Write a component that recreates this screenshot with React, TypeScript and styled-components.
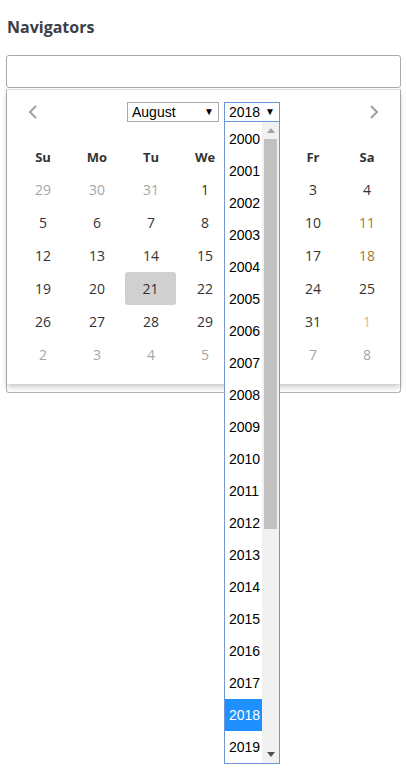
import React from 'react';
import styled, { createGlobalStyle } from 'styled-components';

const GlobalStyle = createGlobalStyle`
  html, body {
    margin: 0;
    padding: 0;
    background: #fff;
  }
  body {
    font-family: "Open Sans", "Liberation Sans", sans-serif;
  }
`;

const Page = styled.div`
  width: 407px;
  height: 773px;
  padding: 0 6px;
  box-sizing: border-box;
  overflow: hidden;
`;

const Title = styled.h3`
  margin: 16px 0 0 1px;
  height: 22px;
  line-height: 22px;
  font-size: 16px;
  font-weight: 700;
  color: #3b4046;
`;

const Input = styled.div`
  margin-top: 17px;
  height: 33px;
  border: 1px solid #aaa;
  border-radius: 3px;
  box-sizing: border-box;
`;

const PickerWrap = styled.div`
  margin-top: 1px;
  height: 304px;
  border: 1px solid #b4b4b4;
  border-top-color: #e2e2e2;
  border-radius: 0 0 3px 3px;
  box-sizing: border-box;
`;

const Calendar = styled.div`
  height: 294px;
  background: #fff;
  box-shadow: 0 3px 6px rgba(0, 0, 0, 0.22);
  padding: 0 7px 0 9px;
  box-sizing: border-box;
`;

const Header = styled.div`
  height: 50px;
  display: flex;
  align-items: flex-start;
  padding-top: 12px;
  box-sizing: border-box;
`;

const NavArrow = styled.div<{ $right?: boolean }>`
  width: 20px;
  height: 20px;
  display: flex;
  align-items: center;
  justify-content: center;
  margin: ${(p) => (p.$right ? '0 9px 0 0' : '0 0 0 7px')};
`;

const Selects = styled.div`
  flex: 1;
  display: flex;
  justify-content: center;
  gap: 5px;
`;

const SelectBox = styled.div<{ $w: number; $focus?: boolean }>`
  position: relative;
  width: ${(p) => p.$w}px;
  height: 20px;
  box-sizing: border-box;
  border: 1px solid ${(p) => (p.$focus ? '#6e95d8' : '#a9a9a9')};
  display: flex;
  align-items: center;
  justify-content: space-between;
  padding: 0 4px 0 4px;
  font-family: "Liberation Sans", Arial, sans-serif;
  font-size: 14px;
  color: #000;
  background: #fff;
`;

const Caret = styled.span`
  font-size: 10px;
  line-height: 1;
`;

const YearList = styled.div`
  position: absolute;
  top: calc(100% + 1px);
  left: -1px;
  width: 56px;
  height: 642px;
  box-sizing: border-box;
  border: 1px solid #6e95d8;
  border-top: none;
  background: #fff;
  display: flex;
  z-index: 5;
`;

const YearItems = styled.div`
  flex: 1;
  display: flex;
  flex-direction: column;
  padding-top: 1px;
`;

const YearItem = styled.div<{ $active?: boolean }>`
  height: 32px;
  flex: none;
  display: flex;
  align-items: center;
  padding-left: 4px;
  font-size: 14px;
  color: ${(p) => (p.$active ? '#fff' : '#000')};
  background: ${(p) => (p.$active ? '#1e90ff' : 'transparent')};
`;

const Scrollbar = styled.div`
  width: 17px;
  background: #f1f1f1;
  display: flex;
  flex-direction: column;
  align-items: center;
`;

const ScrollArrow = styled.div`
  height: 17px;
  width: 17px;
  display: flex;
  align-items: center;
  justify-content: center;
`;

const Thumb = styled.div`
  width: 13px;
  height: 390px;
  background: #c1c1c1;
`;

const Grid = styled.div`
  display: grid;
  grid-template-columns: repeat(7, 54px);
  grid-auto-rows: 33px;
`;

const DayHead = styled.div<{ $covered?: boolean }>`
  display: flex;
  align-items: center;
  justify-content: center;
  font-size: 13px;
  font-weight: 700;
  color: #333;
  visibility: ${(p) => (p.$covered ? 'hidden' : 'visible')};
`;

type Tone = 'normal' | 'muted' | 'holiday' | 'holidayMuted';

const Day = styled.div<{ $tone: Tone; $selected?: boolean; $covered?: boolean }>`
  display: flex;
  align-items: center;
  justify-content: center;
  font-size: 14px;
  border-radius: 3px;
  margin: ${(p) => (p.$selected ? '0 2px 0 1px' : '0')};
  background: ${(p) => (p.$selected ? '#d0d0d0' : 'transparent')};
  visibility: ${(p) => (p.$covered ? 'hidden' : 'visible')};
  color: ${(p) =>
    p.$tone === 'muted'
      ? '#a6a6a6'
      : p.$tone === 'holiday'
      ? '#a9782f'
      : p.$tone === 'holidayMuted'
      ? '#d6bc92'
      : '#333'};
`;

const Chevron = ({ dir }: { dir: 'left' | 'right' }) => (
  <svg width="10" height="16" viewBox="0 0 10 16">
    <path
      d={dir === 'left' ? 'M8 2 L2 8 L8 14' : 'M2 2 L8 8 L2 14'}
      fill="none"
      stroke="#9aa1a8"
      strokeWidth="2"
    />
  </svg>
);

const weeks: [string, Tone][][] = [
  [['29', 'muted'], ['30', 'muted'], ['31', 'muted'], ['1', 'normal'], ['2', 'normal'], ['3', 'normal'], ['4', 'normal']],
  [['5', 'normal'], ['6', 'normal'], ['7', 'normal'], ['8', 'normal'], ['9', 'normal'], ['10', 'normal'], ['11', 'holiday']],
  [['12', 'normal'], ['13', 'normal'], ['14', 'normal'], ['15', 'normal'], ['16', 'normal'], ['17', 'normal'], ['18', 'holiday']],
  [['19', 'normal'], ['20', 'normal'], ['21', 'normal'], ['22', 'normal'], ['23', 'normal'], ['24', 'normal'], ['25', 'normal']],
  [['26', 'normal'], ['27', 'normal'], ['28', 'normal'], ['29', 'normal'], ['30', 'normal'], ['31', 'normal'], ['1', 'holidayMuted']],
  [['2', 'muted'], ['3', 'muted'], ['4', 'muted'], ['5', 'muted'], ['6', 'muted'], ['7', 'muted'], ['8', 'muted']],
];

const dayNames = ['Su', 'Mo', 'Tu', 'We', 'Th', 'Fr', 'Sa'];
const years = Array.from({ length: 20 }, (_, i) => 2000 + i);

// the open year list covers the Thursday column
const COVERED_COL = 4;

export default function App() {
  return (
    <Page>
      <GlobalStyle />
      <Title>Navigators</Title>
      <Input />
      <PickerWrap>
        <Calendar>
          <Header>
            <NavArrow>
              <Chevron dir="left" />
            </NavArrow>
            <Selects>
              <SelectBox $w={92}>
                <span>August</span>
                <Caret>▼</Caret>
              </SelectBox>
              <SelectBox $w={56} $focus>
                <span>2018</span>
                <Caret>▼</Caret>
                <YearList>
                  <YearItems>
                    {years.map((y) => (
                      <YearItem key={y} $active={y === 2018}>
                        {y}
                      </YearItem>
                    ))}
                  </YearItems>
                  <Scrollbar>
                    <ScrollArrow>
                      <svg width="8" height="5" viewBox="0 0 8 5">
                        <path d="M0 5 L4 0 L8 5 Z" fill="#a3a3a3" />
                      </svg>
                    </ScrollArrow>
                    <Thumb />
                    <div style={{ flex: 1 }} />
                    <ScrollArrow>
                      <svg width="8" height="5" viewBox="0 0 8 5">
                        <path d="M0 0 L4 5 L8 0 Z" fill="#505050" />
                      </svg>
                    </ScrollArrow>
                  </Scrollbar>
                </YearList>
              </SelectBox>
            </Selects>
            <NavArrow $right>
              <Chevron dir="right" />
            </NavArrow>
          </Header>
          <Grid>
            {dayNames.map((d, i) => (
              <DayHead key={d} $covered={i === COVERED_COL}>
                {d}
              </DayHead>
            ))}
            {weeks.flat().map(([n, tone], i) => (
              <Day key={i} $tone={tone} $selected={i === 23} $covered={i % 7 === COVERED_COL}>
                {n}
              </Day>
            ))}
          </Grid>
        </Calendar>
      </PickerWrap>
    </Page>
  );
}
